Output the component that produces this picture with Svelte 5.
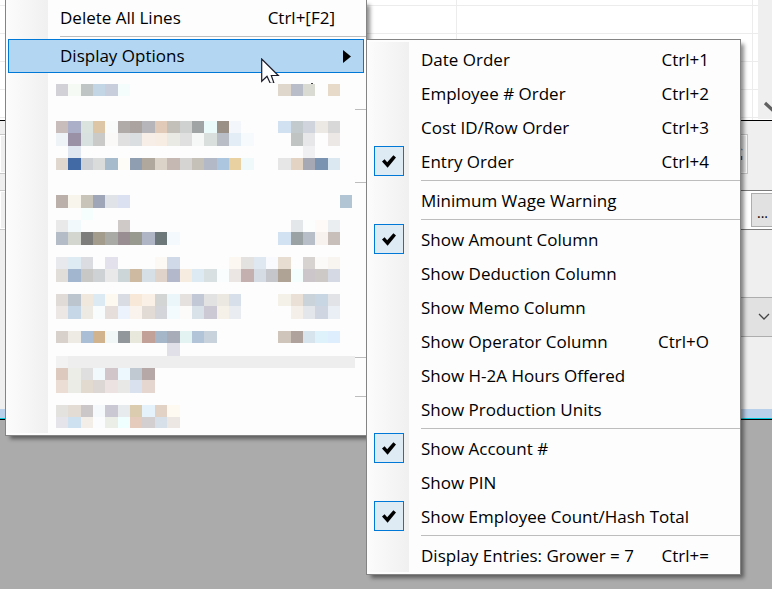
<script>
  const CELL = 12.35;
  const edge = (origin, i) => Math.round(origin + i * CELL);

  // Obscured menu entries: [row, first column, colours]; "-" leaves a cell empty.
  const mosaic = [
    [0, 0, 'd1d1d7 f5faf5 bfc5c4 c3d6e6 c8cedb f5fcfc'],
    [0, 18, 'dfd7cc b9bdca dadcd4 - e7dac9'],
    [3, 0, 'c8bdbb abb0c8 dae3de dcc6a5 f9fafa b0aba8 aba3a0 b6b5b9 e1cab8 c3bfb9 cfd1d1 a0a4a5 ebfbfb 9b9086 f3f7fb'],
    [3, 18, 'd2e1f1 c3cacd d0d4dc ece8e3 d8d8d9'],
    [4, 0, 'eef3f8 9b91a6 d8e0e0 cacac9 faf9f8 e0e0e1 dadee1 f6eee7 f8ede3 eaeae4 e0e0e0 f6f8f7 d9dfdd b8bdc6 e2edf5 f6fafc'],
    [4, 19, 'c0c5c4 e7e7e9 - ece8e6'],
    [5, 1, 'e0e7f1'],
    [5, 20, 'f0f0f3'],
    [6, 0, 'e0d8ce 426ba5 cdd1d6 dadcdc a6bccd fefcf7 909eb2 b0a89d dbd3c8 c5b8b3 d5d4d3 c6c1b8 b4b9c8 acc6df ead1a2 eff9fa'],
    [6, 18, 'e6e6e6 e3d3c2 a6a8b4 7993b0 dce8f1'],
    [9, 0, 'bcb0ab f8f5ed c8c4b9 9fa6b8 e0e3e8 dce1f1'],
    [9, 23, 'b1c5d4'],
    [10, 2, 'f5fdfd'],
    [11, 0, 'e9e9e9 f2f9fd - - - cfcac7'],
    [11, 19, 'e3e7ea fbfefd fdfaf8 eaeef1'],
    [12, 0, 'b4bcc7 d2d6cf 7d7d7b a39b8c a9aaa6 998e92 98998f afb5c5 6d787b f4f9fd'],
    [12, 18, 'd2e2f2 9aa2a3 b8bec8 f7f2ed c8bfba'],
    [14, 0, 'e7e9ed dfebf2 dbdbe2 - e3e2ec - - - fcf8f3 d0d9e8'],
    [14, 14, 'fcf7f0 e4e2e1 dfe7f1 f8fafd e8ddd1 - d6d3d0 fbfaf9 f8f5f1'],
    [15, 0, 'e1ddd8 a2b6d0 c8c8c7 ced2d5 e9e9e9 ccd6d8 cdbaa0 d5dfe5 e0d3c9 b3b9cb f6ede0 ddeaf3 d9e0e1 f9fdfd ebe5e4 c4b0ae d5dce4 c4c6cb aea395 f4fefd ccc6ca ccc9c6 d5d9e3'],
    [17, 0, 'e0dbd6 bcc4ce f0e7dd dcebf3 fdf8f0 d9dde3 f7e8d8 faf0e5 d3d4d4 ebf6fa e4e1de c2c8d5 e2e2e2 eae8e0 d7dfea'],
    [17, 18, 'f4f1e9 eae0d5 cad2da c8d5e2 e1e3e6'],
    [18, 0, 'ece7e4 c6d7e8 eceae2 f8fcfc e5deda edf3fc faf3ed e1dad5 d3d5da f4fbfe fdfbf9 d9e1e9 ccc9d5 f5f1e9 e9ecf1'],
    [18, 19, 'f5efea e3e6eb d0d6e1 e9eff4'],
    [20, 0, 'd8d1cb eeebe4 aabfd6 d1b48e f1f6f6 92979c e9e8dd c1a198 a5b6c9 a8abb8 e2f3f1 b2c4d8 c7d2dd'],
    [20, 18, 'd0c5bb afa29d d7e4ed def2fb deeefc'],
    [21, 9, 'e1e0e9'],
    [22, 0, 'f2f2f2'],
    [23, 0, 'ddc9bd ecede6 e0dfe0 f2f9fc d1c5c9 edf7fe c0c8d1 b5a8a7'],
    [24, 0, 'ebddd4 ebece6 e2dacf dcd6d4 ebe2e1 e8e8e6 d9e1ee e5d7cf'],
    [26, 0, 'e4e2de e3dcd5 cbc7c9 f5f9fb c9c8d3 e7ebee dbccb0 e5f2fc e1d2c5 fefaf2'],
    [27, 0, 'e4e4ea cee1f0 f3eee8 fbfcfe ebede7 effefe e4cbbb d3ced0 d7dfe8 ece7e3']
  ];

  const cells = mosaic.flatMap(([row, start, colours]) =>
    colours.split(' ').flatMap((colour, i) => {
      if (colour === '-') return [];
      const x = edge(8, start + i);
      const y = edge(11, row);
      const bottom = Math.min(edge(11, row + 1), 355);
      return [{ x, y, w: edge(8, start + i + 1) - x, h: bottom - y, fill: '#' + colour }];
    })
  );

  const stubs = [36, 109, 284, 323];

  let groups = $state([
    [
      { label: 'Date Order', keys: 'Ctrl+1', checked: false },
      { label: 'Employee # Order', keys: 'Ctrl+2', checked: false },
      { label: 'Cost ID/Row Order', keys: 'Ctrl+3', checked: false },
      { label: 'Entry Order', keys: 'Ctrl+4', checked: true }
    ],
    [{ label: 'Minimum Wage Warning', keys: '', checked: false }],
    [
      { label: 'Show Amount Column', keys: '', checked: true },
      { label: 'Show Deduction Column', keys: '', checked: false },
      { label: 'Show Memo Column', keys: '', checked: false },
      { label: 'Show Operator Column', keys: 'Ctrl+O', checked: false },
      { label: 'Show H-2A Hours Offered', keys: '', checked: false },
      { label: 'Show Production Units', keys: '', checked: false }
    ],
    [
      { label: 'Show Account #', keys: '', checked: true },
      { label: 'Show PIN', keys: '', checked: false },
      { label: 'Show Employee Count/Hash Total', keys: '', checked: true }
    ],
    [{ label: 'Display Entries: Grower = 7', keys: 'Ctrl+=', checked: false }]
  ]);
</script>

<div class="desktop">
  <main class="window">
    <div class="sheet">
      <div class="lines"></div>
      <div class="scrollbar">
        <svg width="14" height="12" viewBox="0 0 14 12" aria-hidden="true">
          <path d="M7 2 L14 8.5 L21 2" fill="none" stroke="#606060" stroke-width="3.2" />
        </svg>
      </div>
    </div>
    <div class="tools">
      <div class="toolbox">
        <svg width="4" height="12" viewBox="0 0 4 12" aria-hidden="true">
          <path d="M0 1 L1.5 2" fill="none" stroke="#6fa5cf" stroke-width="1.5" />
          <path d="M0.5 8 V12" fill="none" stroke="#1f5f9a" stroke-width="1.5" />
        </svg>
      </div>
    </div>
    <div class="field">
      <div class="pane"></div>
      <div class="entry"><button class="browse" type="button">...</button></div>
    </div>
    <div class="options">
      <div class="combo">
        <select aria-label="Options"><option></option></select>
        <svg width="12" height="8" viewBox="0 0 12 8" aria-hidden="true">
          <path d="M1 1 L6 6 L11 1" fill="none" stroke="#444" stroke-width="1.3" />
        </svg>
      </div>
    </div>
    <div class="frame"></div>
  </main>

  <nav class="menu main-menu" aria-label="Edit">
    <button class="item" type="button"><span>Delete All Lines</span><kbd>Ctrl+[F2]</kbd></button>
    <hr />
    <button class="item open" type="button" aria-expanded="true">
      <span>Display Options</span>
      <svg class="more" width="8" height="13" viewBox="0 0 8 13" aria-hidden="true"><path d="M0 0 L8 6.5 L0 13 Z" fill="#000" /></svg>
    </button>
    <svg class="obscured" width="318" height="360" viewBox="0 0 318 360" shape-rendering="crispEdges" aria-hidden="true">
      <rect x="20" y="283" width="287" height="12" fill="#eeeeee" />
      {#each cells as c}
        <rect x={c.x} y={c.y} width={c.w} height={c.h} fill={c.fill} />
      {/each}
      {#each stubs as y}
        <rect x="307" {y} width="11" height="1" fill="#bdbdbd" />
      {/each}
      <rect x="263" y="10" width="2" height="1" fill="#444" />
    </svg>
  </nav>

  <section class="menu sub-menu" aria-label="Display Options">
    {#each groups as group, g}
      {#if g > 0}<hr />{/if}
      {#each group as item}
        <label class="item">
          <input type="checkbox" bind:checked={item.checked} />
          <svg class="tick" width="14" height="13" viewBox="0 0 14 13" aria-hidden="true">
            <path d="M0 6.6 L2.6 4.2 L5.2 7.2 L11.4 0.2 L14 2.4 L5.6 12.8 Z" fill="#000" />
          </svg>
          <span>{item.label}</span><kbd>{item.keys}</kbd>
        </label>
      {/each}
    {/each}
  </section>

  <svg class="cursor" width="19" height="25" viewBox="0 0 19 25" aria-hidden="true">
    <path d="M0.7 1 V23.3 L6 18.2 L9.3 25.3 H13 L10.3 17.5 H17.3 Z" fill="#fff" stroke="#1b1b2a" stroke-width="1.2" />
  </svg>
</div>

<style>
  :global(body) {
    margin: 0;
    background: #ababab;
  }
  .desktop {
    position: relative;
    min-height: 100vh;
    overflow: hidden;
    background: #ababab;
    font-family: 'Segoe UI', 'Open Sans', 'Noto Sans', sans-serif;
    font-size: 17px;
    line-height: 24px;
    color: #000;
  }
  .window {
    display: flex;
    flex-direction: column;
    background: #efefef;
  }
  .sheet {
    display: flex;
    height: 120px;
    border-bottom: 1px solid #000;
    background: #fff;
  }
  .lines {
    flex: 1;
    background:
      linear-gradient(#ececec, #ececec) 456px 0 / 1px 100% no-repeat,
      linear-gradient(#ececec, #ececec) right 5px top 0 / 1px 100% no-repeat,
      linear-gradient(#ececec 1px, transparent 1px) 0 5px / 100% 28px;
  }
  .scrollbar {
    display: flex;
    align-items: flex-end;
    width: 14px;
    height: 119px;
    padding-bottom: 6px;
    box-sizing: border-box;
    background: #efefef;
  }
  .tools {
    height: 69px;
    padding: 13px 24px 0 0;
    box-sizing: border-box;
  }
  .toolbox {
    display: flex;
    align-items: center;
    justify-content: flex-end;
    height: 40px;
    box-sizing: border-box;
    border: 1px solid #c8c8c8;
    border-left: 0;
    box-shadow: inset 0 0 0 1px #fff;
    padding-right: 2px;
  }
  .field {
    display: flex;
    height: 40px;
  }
  .pane {
    flex: 1;
    border: solid #c8c8c8;
    border-width: 1px 0;
    box-shadow: inset 0 0 0 1px #fff;
  }
  .entry {
    flex: 1;
    display: flex;
    align-items: center;
    justify-content: flex-end;
    border: solid #7a7a7a;
    border-width: 1px 0;
    background: #fff;
  }
  .browse {
    width: 21px;
    height: 34px;
    padding: 4px 0 0 5px;
    border: 1px solid #adadad;
    border-right: 0;
    background: #e1e1e1;
    font: 14px 'Segoe UI', 'Open Sans', sans-serif;
    text-align: left;
  }
  .options {
    display: flex;
    justify-content: flex-end;
    height: 179px;
    padding-top: 67px;
    box-sizing: border-box;
  }
  .combo {
    position: relative;
    width: 50%;
    height: 40px;
  }
  .combo select {
    width: 100%;
    height: 100%;
    appearance: none;
    border: solid #adadad;
    border-width: 1px 0;
    border-radius: 0;
    background: #e1e1e1;
  }
  .combo svg {
    position: absolute;
    right: 2px;
    top: 16px;
  }
  .frame {
    height: 9px;
    background: #b9d0ea;
    border-bottom: 1px solid #00c8dc;
    box-shadow: 0 1px #000;
  }
  .menu {
    position: absolute;
    display: flex;
    flex-direction: column;
    box-sizing: border-box;
    border: 1px solid #848484;
    background: linear-gradient(90deg, #fcfcfc, #f0f0f0) 0 2px / 42px calc(100% - 4px) no-repeat #fdfdfd;
    box-shadow: 4px 4px 4px -1px rgba(0, 0, 0, 0.45);
  }
  .main-menu {
    left: 5px;
    top: 0;
    width: 362px;
    border-top: 0;
    padding-bottom: 2px;
    background-position: 0 -2px;
    background-size: 42px 100%;
  }
  .sub-menu {
    left: 366px;
    top: 39px;
    width: 375px;
    padding: 3px 0 1px;
  }
  .item {
    position: relative;
    display: flex;
    align-items: center;
    justify-content: space-between;
    height: 34px;
    box-sizing: border-box;
    padding: 0 31px 0 54px;
    border: 0;
    background: none;
    font: inherit;
    color: inherit;
    white-space: nowrap;
  }
  kbd {
    font: inherit;
  }
  .main-menu > .item:first-child {
    height: 35px;
  }
  .main-menu .open {
    margin: 0 2px;
    padding: 0 12px 0 51px;
    border: 1px solid #0078d7;
    background: #b3d7f3;
  }
  hr {
    width: auto;
    height: 1px;
    margin: 1px 0 3px 54px;
    border: 0;
    background: #bdbdbd;
  }
  .main-menu hr {
    margin-bottom: 2px;
  }
  .obscured {
    display: block;
    margin-left: 42px;
  }
  input {
    position: absolute;
    left: 7px;
    top: 1px;
    width: 30px;
    height: 30px;
    margin: 0;
    appearance: none;
  }
  input:checked {
    border: 1px solid #0078d7;
    background: #deebf5;
  }
  .tick {
    position: absolute;
    left: 15px;
    top: 10px;
    visibility: hidden;
    pointer-events: none;
  }
  input:checked + .tick {
    visibility: visible;
  }
  .cursor {
    position: absolute;
    left: 261px;
    top: 58px;
  }
</style>
